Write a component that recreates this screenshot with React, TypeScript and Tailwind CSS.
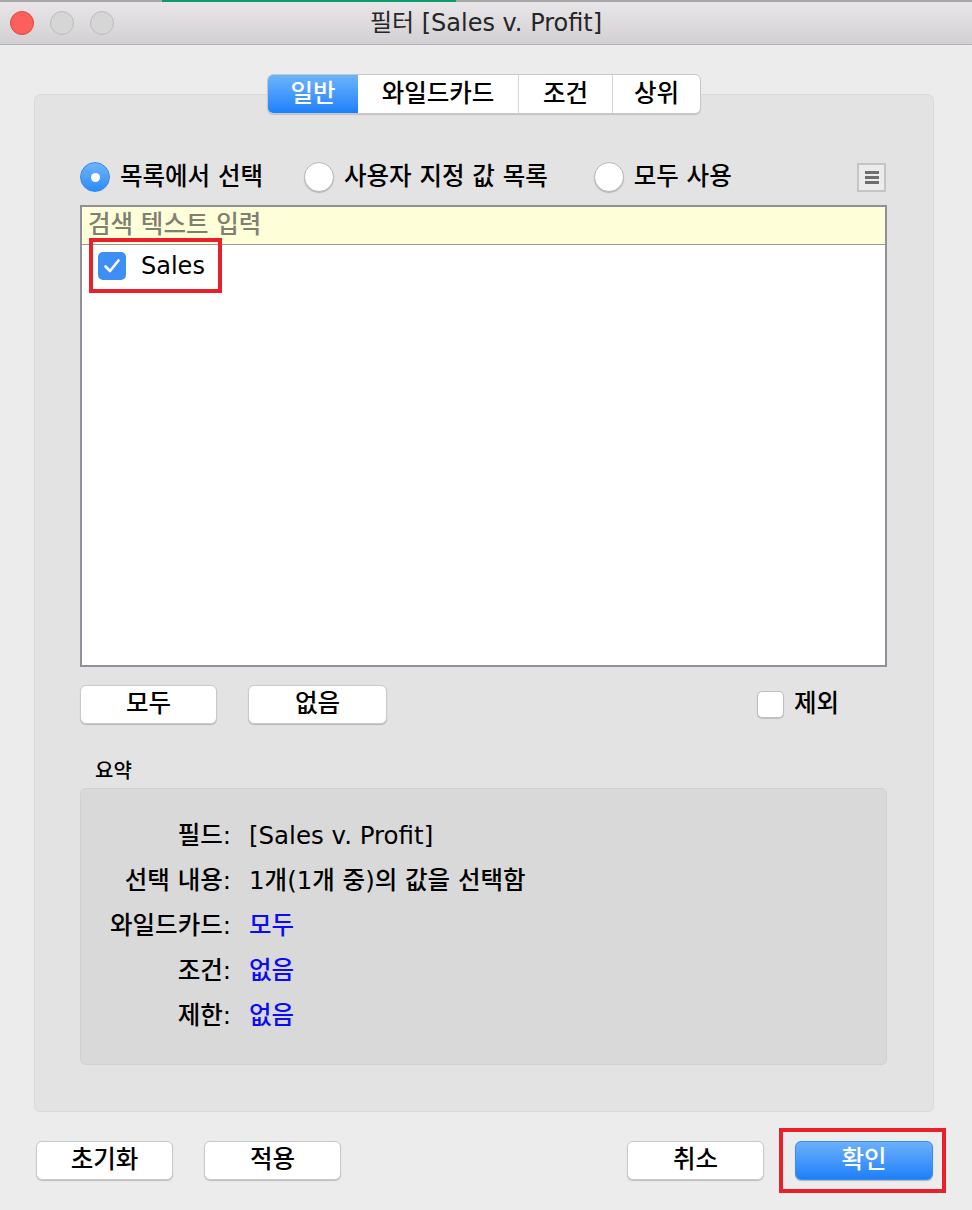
import React from 'react'

const font = { fontFamily: '"DejaVu Sans", "Noto Sans CJK KR", sans-serif' }

function Radio({ checked, label }: { checked?: boolean; label: string }) {
  return (
    <div className="flex items-center gap-[10px]">
      {checked ? (
        <div className="w-[30px] h-[30px] rounded-full bg-gradient-to-b from-[#6db4fb] to-[#2a8cf7] border border-[#3a8ae8] flex items-center justify-center">
          <div className="w-[9px] h-[9px] rounded-full bg-white" />
        </div>
      ) : (
        <div className="w-[30px] h-[30px] rounded-full bg-white border border-[#b8b8b8] shadow-[0_1px_1px_rgba(0,0,0,0.2)]" />
      )}
      <span className="text-[24.5px] font-medium text-black leading-none">{label}</span>
    </div>
  )
}

function Btn({ label, w = 'w-[137px]', primary }: { label: string; w?: string; primary?: boolean }) {
  return (
    <div
      className={`${w} h-[39px] rounded-[6px] flex items-center justify-center text-[24.5px] font-medium leading-none ${
        primary
          ? 'bg-gradient-to-b from-[#6ab0fb] to-[#1a7ffa] text-white shadow-[0_1px_1px_rgba(0,0,0,0.25)] border border-[#3d8de8]'
          : 'bg-white text-black border border-[#c9c9c9] shadow-[0_1px_1px_rgba(0,0,0,0.2)]'
      }`}
    >
      {label}
    </div>
  )
}

function Traffic({ color }: { color: string }) {
  return <div className={`w-[24px] h-[24px] rounded-full border ${color}`} />
}

export default function App() {
  const rows: [string, string, boolean][] = [
    ['필드:', '[Sales v. Profit]', false],
    ['선택 내용:', '1개(1개 중)의 값을 선택함', false],
    ['와일드카드:', '모두', true],
    ['조건:', '없음', true],
    ['제한:', '없음', true],
  ]

  return (
    <div className="w-[972px] h-[1210px] bg-[#ececec] flex flex-col overflow-hidden" style={font}>
      {/* backdrop strip */}
      <div className="h-[2px] bg-[#a8a8a8] flex">
        <div className="w-[162px]" />
        <div className="w-[294px] bg-[#0e9a6c]" />
      </div>

      {/* Title bar */}
      <div className="h-[43px] bg-gradient-to-b from-[#e8e6e8] to-[#d2d0d2] border-b border-[#b4b4b4] flex items-center px-[10px]">
        <div className="flex gap-[16px] items-center">
          <Traffic color="bg-[#fc605c] border-[#e0443e]" />
          <Traffic color="bg-[#d6d6d6] border-[#bdbdbd]" />
          <Traffic color="bg-[#d6d6d6] border-[#bdbdbd]" />
        </div>
        <div className="flex-1 text-center text-[24px] text-[#262626] pr-[104px] leading-none">
          필터 [Sales v. Profit]
        </div>
      </div>

      {/* Body */}
      <div className="pl-[34px] pr-[38px] pt-[29px] flex flex-col">
        {/* Tabs */}
        <div className="flex justify-center -mb-[20px] relative z-10">
          <div className="flex h-[40px] rounded-[6px] bg-white border border-[#c8c8c8] shadow-[0_1px_1px_rgba(0,0,0,0.15)] overflow-hidden text-[24.5px] font-medium leading-none">
            <div className="w-[90px] flex items-center justify-center bg-gradient-to-b from-[#6cb3fb] to-[#1a80fb] text-white">일반</div>
            <div className="w-[161px] flex items-center justify-center border-r border-[#d6d6d6] text-black">와일드카드</div>
            <div className="w-[94px] flex items-center justify-center border-r border-[#d6d6d6] text-black">조건</div>
            <div className="w-[87px] flex items-center justify-center text-black">상위</div>
          </div>
        </div>

        {/* Panel */}
        <div className="h-[1018px] bg-[#e3e3e3] border border-[#d9d9d9] rounded-[6px] pt-[67px] pl-[45px] pr-[46px] flex flex-col">
          {/* Radio row */}
          <div className="flex items-center h-[30px]">
            <Radio checked label="목록에서 선택" />
            <div className="w-[41px]" />
            <Radio label="사용자 지정 값 목록" />
            <div className="w-[46px]" />
            <Radio label="모두 사용" />
            <div className="flex-1" />
            <div className="w-[29px] h-[29px] bg-[#ececec] border-2 border-[#c4c4c4] flex flex-col items-center justify-center gap-[2px] mr-[1px]">
              <div className="w-[14px] h-[3px] bg-[#6e6e6e]" />
              <div className="w-[14px] h-[3px] bg-[#6e6e6e]" />
              <div className="w-[14px] h-[3px] bg-[#6e6e6e]" />
            </div>
          </div>

          {/* List */}
          <div className="mt-[13px] h-[462px] border-2 border-[#8f9099] bg-white flex flex-col">
            <div className="h-[38px] bg-[#fefed8] border-b border-[#9a9a9a] flex items-center px-[6px] text-[24.5px] font-medium text-[#7f7f72] leading-none">
              검색 텍스트 입력
            </div>
            <div className="ml-[7px] mt-[-7px] w-[133px] h-[55px] border-[4px] border-[#e8202a] flex items-center pl-[5px] gap-[15px]">
              <div className="w-[28px] h-[28px] rounded-[5px] bg-[#3d8ff6] flex items-center justify-center">
                <svg width="18" height="16" viewBox="0 0 18 16" fill="none">
                  <path d="M2.5 8.5 L7 13 L15.5 2.5" stroke="white" strokeWidth="2.6" strokeLinecap="round" strokeLinejoin="round" />
                </svg>
              </div>
              <span className="text-[24px] text-black leading-none">Sales</span>
            </div>
          </div>

          {/* Buttons row */}
          <div className="mt-[18px] flex items-center h-[39px]">
            <Btn label="모두" />
            <div className="w-[31px]" />
            <Btn label="없음" w="w-[139px]" />
            <div className="flex-1" />
            <div className="flex items-center gap-[10px] mr-[48px]">
              <div className="w-[27px] h-[27px] rounded-[5px] bg-white border border-[#bdbdbd] shadow-[0_1px_1px_rgba(0,0,0,0.15)]" />
              <span className="text-[24.5px] font-medium text-black leading-none">제외</span>
            </div>
          </div>

          {/* Summary */}
          <div className="mt-[37px] pl-[15px] text-[20px] font-medium text-black leading-none">요약</div>
          <div className="mt-[7px] h-[277px] bg-[#d9d9d9] border border-[#d0d0d0] rounded-[6px] pt-[31px] flex flex-col gap-[13px]">
            {rows.map(([label, value, link]) => (
              <div key={label} className="flex items-center h-[32px] text-[24.5px] font-medium leading-none">
                <div className="w-[150px] text-right text-black">{label}</div>
                <div className={`ml-[18px] ${link ? 'text-[#0b0bf5]' : 'text-black'}`}>{value}</div>
              </div>
            ))}
          </div>
        </div>

        {/* Footer buttons */}
        <div className="mt-[28px] flex items-center h-[40px]">
          <div className="ml-[2px]">
            <Btn label="초기화" />
          </div>
          <div className="w-[31px]" />
          <Btn label="적용" />
          <div className="flex-1" />
          <Btn label="취소" />
          <div className="w-[31px]" />
          <div className="relative mr-[1px]">
            <Btn label="확인" w="w-[138px]" primary />
            <div className="absolute -left-[16px] -top-[13px] w-[167px] h-[65px] border-[4px] border-[#e8202a] pointer-events-none" />
          </div>
        </div>
      </div>
    </div>
  )
}
